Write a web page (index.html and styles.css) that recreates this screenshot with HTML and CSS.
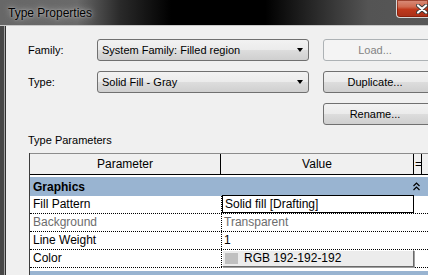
FILE: index.html
```html
<!DOCTYPE html>
<html lang="en">
<head>
    <meta charset="UTF-8">
    <meta name="viewport" content="width=device-width, initial-scale=1.0">
    <title>Type Properties</title>
    <link rel="stylesheet" href="styles.css">
</head>
<body>
    <div class="window">
        <div class="titlebar">
            <span class="title">Type Properties</span>
            <button class="close">
                <svg width="12" height="10" viewBox="0 0 12 10">
                    <path d="M2 1.5 L10 8.5 M10 1.5 L2 8.5" stroke="#3a3a3a" stroke-width="4" stroke-linecap="round"/>
                    <path d="M2 1.5 L10 8.5 M10 1.5 L2 8.5" stroke="#fff" stroke-width="2.2" stroke-linecap="round"/>
                </svg>
            </button>
        </div>
        <div class="frame">
            <div class="content">
                <div class="top">
                    <label class="lbl">Family:</label>
                    <div class="select">System Family: Filled region<span class="arrow"></span></div>
                    <button class="btn" disabled>Load...</button>

                    <label class="lbl">Type:</label>
                    <div class="select">Solid Fill - Gray<span class="arrow"></span></div>
                    <button class="btn">Duplicate...</button>

                    <span></span>
                    <span></span>
                    <button class="btn">Rename...</button>
                </div>

                <div class="section-label">Type Parameters</div>

                <div class="grid">
                    <div class="grid-head">
                        <div class="hcell">Parameter</div>
                        <div class="hcell">Value</div>
                        <div class="hcell eq">=</div>
                    </div>

                    <div class="group">
                        <span>Graphics</span>
                        <svg width="7" height="9" viewBox="0 0 7 9">
                            <path d="M0.5 4 L3.5 1 L6.5 4 M0.5 8 L3.5 5 L6.5 8" fill="none" stroke="#000" stroke-width="1.2"/>
                        </svg>
                    </div>
                    <div class="row">
                        <div class="pcell">Fill Pattern</div>
                        <div class="vcell"><div class="vbox">Solid fill [Drafting]</div></div>
                    </div>
                    <div class="row off">
                        <div class="pcell">Background</div>
                        <div class="vcell"><span class="vtext">Transparent</span></div>
                    </div>
                    <div class="row">
                        <div class="pcell">Line Weight</div>
                        <div class="vcell"><span class="vtext">1</span></div>
                    </div>
                    <div class="row">
                        <div class="pcell">Color</div>
                        <div class="vcell"><div class="colorbtn"><span class="swatch"></span>RGB 192-192-192</div></div>
                    </div>

                    <div class="group next"></div>
                </div>
            </div>
        </div>
    </div>
</body>
</html>
```

FILE: styles.css
```css
body {
    margin: 0;
    width: 428px;
    height: 275px;
    overflow: hidden;
    background: #474747;
    font-family: "Liberation Sans", Arial, sans-serif;
    font-size: 11px;
    color: #000;
}
.window {
    display: flex;
    flex-direction: column;
    height: 275px;
    overflow: hidden;
}
.titlebar {
    flex-shrink: 0;
    height: 25px;
    border-bottom: 1px solid #c8c8c8;
    display: flex;
    justify-content: space-between;
    align-items: flex-start;
    background: linear-gradient(90deg, #676767 0, #6a6a6a 18%, #2a2a2a 28%, #000 40%, #000 62%, #2e2e2e 75%, #545454 86%, #575757 100%);
}
.title {
    margin: 6px 0 0 8px;
    font-size: 12px;
    line-height: 14px;
    color: #000;
    text-shadow: 0 0 6px rgba(255, 255, 255, 0.7), 0 0 2px rgba(255, 255, 255, 0.5);
}
.close {
    width: 32px;
    height: 18px;
    padding: 0 0 0 19px;
    border: 1px solid #d8d8d8;
    border-top: none;
    border-right: none;
    border-radius: 0 0 0 4px;
    background: linear-gradient(180deg, #d98e7c 0, #cf6a50 40%, #c0391c 55%, #a8311a 100%);
    box-shadow: inset 0 0 0 1px rgba(120, 20, 0, 0.6);
    display: flex;
    align-items: center;
}
.frame {
    flex: 1;
    min-height: 0;
    display: flex;
    padding-left: 5px;
}
.content {
    flex: 1;
    overflow: hidden;
    background: #f0f0f0;
    border-left: 1px solid #2f2f2f;
    box-shadow: -1px 0 0 #a2a2a2;
    padding: 13px 0 0 22px;
}
.top {
    display: grid;
    grid-template-columns: 69px 226px 110px;
    grid-auto-rows: 22px;
    row-gap: 10px;
}
.top .lbl {
    grid-column: 1;
    align-self: center;
}
.select {
    position: relative;
    border: 1px solid #707070;
    border-radius: 3px;
    background: linear-gradient(180deg, #f2f2f2 0, #ebebeb 50%, #dddddd 51%, #cfcfcf 100%);
    padding-left: 4px;
    line-height: 20px;
    width: 212px;
    box-sizing: border-box;
}
.arrow {
    position: absolute;
    right: 5px;
    top: 8px;
    border-left: 3.5px solid transparent;
    border-right: 3.5px solid transparent;
    border-top: 4px solid #000;
}
.btn {
    font: inherit;
    color: #000;
    border: 1px solid #707070;
    border-radius: 3px;
    background: linear-gradient(180deg, #f2f2f2 0, #ebebeb 50%, #dddddd 51%, #cfcfcf 100%);
    padding: 0;
    padding-right: 6px;
}
.btn:disabled {
    color: #838383;
    border-color: #adb2b5;
    background: #f4f4f4;
}
.section-label {
    margin-top: 8px;
    line-height: 14px;
}
.grid {
    margin: 6px 0 0 1px;
    width: 400px;
    background: #fff;
    border-left: 1px solid #3c3c3c;
}
.grid-head {
    display: grid;
    grid-template-columns: 191px 193px 8px 1fr;
    height: 20px;
    border-top: 1px solid #8c8c8c;
    border-bottom: 1px solid #000;
    background: #f0f0f0;
    font-size: 12px;
}
.hcell {
    text-align: center;
    line-height: 20px;
    border-right: 1px solid #000;
}
.eq {
    text-align: left;
    padding-left: 1px;
}
.group {
    margin-top: 2px;
    height: 19px;
    background: #99b4d1;
    display: flex;
    justify-content: space-between;
    align-items: center;
    padding: 0 10px 0 3px;
    font-size: 12px;
    font-weight: bold;
}
.group.next {
    margin-top: 3px;
}
.row {
    display: grid;
    grid-template-columns: 192px 1fr;
    height: 17px;
    border-bottom: 1px dotted #000;
    font-size: 12px;
    line-height: 17px;
}
.pcell {
    padding-left: 3px;
    border-right: 1px dotted #000;
}
.vcell {
    border-right: 1px dotted #000;
}
.row.off .pcell,
.row.off .vtext {
    color: #6d6d6d;
}
.vtext {
    padding-left: 2px;
}
.vbox {
    width: 192px;
    height: 18px;
    box-sizing: border-box;
    border: 1px solid #000;
    padding-left: 2px;
    margin-top: -1px;
    line-height: 16px;
}
.colorbtn {
    width: 192px;
    height: 17px;
    box-sizing: border-box;
    border: 1px solid;
    border-color: #fff #696969 #696969 #fff;
    box-shadow: 1px 1px 0 #a0a0a0;
    background: #ececec;
    display: flex;
    align-items: center;
    padding-left: 2px;
}
.swatch {
    width: 13px;
    height: 11px;
    background: #c0c0c0;
    margin-right: 6px;
}
```
